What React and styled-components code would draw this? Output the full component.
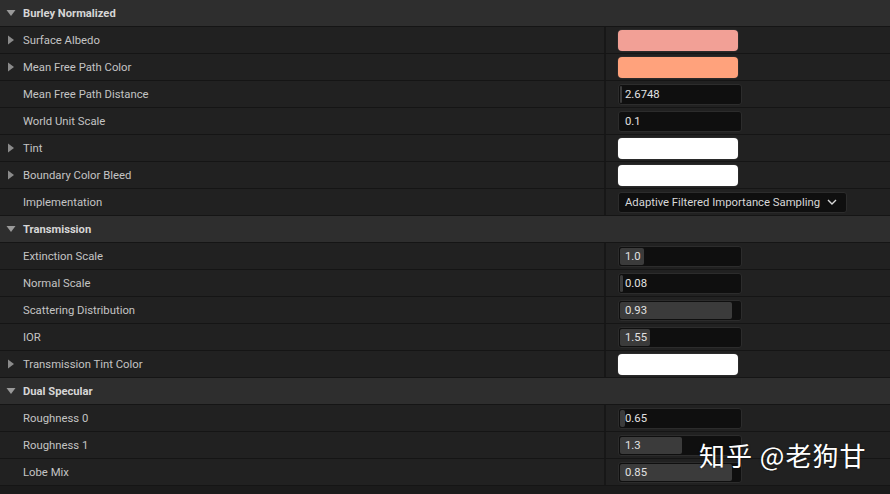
import React from "react";
import styled, { createGlobalStyle } from "styled-components";

const Global = createGlobalStyle`
  html, body { margin: 0; padding: 0; background: #1a1a1a; }
  body { font-family: Roboto, "Noto Sans", "Liberation Sans", sans-serif; }
`;

const Panel = styled.div`
  position: relative;
  width: 890px;
  height: 494px;
  background: #191919;
  overflow: hidden;
  display: flex;
  flex-direction: column;
`;

const HeaderRow = styled.div`
  height: 26px;
  flex: 0 0 26px;
  border-bottom: 1px solid #151515;
  background: #2e2e2e;
  display: flex;
  align-items: center;
  color: #d6d6d6;
  font-size: 11.2px;
  font-weight: 700;
`;

const Row = styled.div`
  height: 26px;
  flex: 0 0 26px;
  border-bottom: 1px solid #151515;
  background: #212121;
  display: grid;
  grid-template-columns: 604px 2px 1fr;
`;

const NameCell = styled.div`
  display: flex;
  align-items: center;
  color: #c4c4c4;
  font-size: 11.3px;
`;

const Divider = styled.div`
  background: #171717;
`;

const ValueCell = styled.div`
  display: flex;
  align-items: center;
  padding-left: 12px;
`;

const ArrowSlot = styled.div`
  width: 23px;
  flex: 0 0 23px;
  display: flex;
  justify-content: center;
  align-items: center;
  padding-right: 2px;
  box-sizing: border-box;
`;

const Swatch = styled.div`
  width: 120px;
  height: 21px;
  border-radius: 4px;
  background: ${(p) => p.$color};
  box-shadow: 0 0 0 1px #2a2a2a;
`;

const NumBox = styled.div`
  position: relative;
  width: 122px;
  height: 19px;
  border-radius: 3px;
  background: #0f0f0f;
  border: 1px solid #2c2c2c;
  display: flex;
  align-items: center;
  overflow: hidden;
`;

const Fill = styled.div`
  position: absolute;
  left: 1px;
  top: 1px;
  bottom: 1px;
  border-radius: 2px;
  background: #3b3b3b;
`;

const NumText = styled.span`
  position: relative;
  padding-left: 6px;
  color: #e2e2e2;
  font-size: 11.3px;
`;

const Dropdown = styled.div`
  width: 221px;
  height: 19px;
  border-radius: 3px;
  background: #0f0f0f;
  border: 1px solid #2c2c2c;
  display: flex;
  align-items: center;
  padding-left: 6px;
  box-sizing: content-box;
  color: #d8d8d8;
  font-size: 11.3px;
  gap: 7px;
`;

const Bottom = styled.div`
  flex: 1;
  background: #1b1b1b;
`;

const Watermark = styled.div`
  position: absolute;
  left: 699px;
  top: 436px;
  color: #ffffff;
  font-family: "Noto Sans CJK SC", "Noto Sans", sans-serif;
  font-size: 26px;
  letter-spacing: 1px;
  text-shadow: 0 0 2px rgba(0,0,0,0.6);
  white-space: nowrap;
`;

const Tri = ({ open }) =>
  open ? (
    <svg width="10" height="8" viewBox="0 0 10 8">
      <path d="M0.5 1 L9.5 1 L5 7 Z" fill="#9a9a9a" />
    </svg>
  ) : (
    <svg width="8" height="10" viewBox="0 0 8 10">
      <path d="M1 0.5 L7 5 L1 9.5 Z" fill="#8a8a8a" />
    </svg>
  );

const Chevron = () => (
  <svg width="10" height="8" viewBox="0 0 10 8">
    <path d="M1 2 L5 6 L9 2" stroke="#d8d8d8" strokeWidth="1.4" fill="none" />
  </svg>
);

const rows = [
  { h: "Burley Normalized" },
  { n: "Surface Albedo", e: true, c: "#f2a096" },
  { n: "Mean Free Path Color", e: true, c: "#ffa27c" },
  { n: "Mean Free Path Distance", v: "2.6748", f: 2 },
  { n: "World Unit Scale", v: "0.1", f: 0 },
  { n: "Tint", e: true, c: "#ffffff" },
  { n: "Boundary Color Bleed", e: true, c: "#ffffff" },
  { n: "Implementation", d: "Adaptive Filtered Importance Sampling" },
  { h: "Transmission" },
  { n: "Extinction Scale", v: "1.0", f: 24 },
  { n: "Normal Scale", v: "0.08", f: 3 },
  { n: "Scattering Distribution", v: "0.93", f: 112 },
  { n: "IOR", v: "1.55", f: 30 },
  { n: "Transmission Tint Color", e: true, c: "#ffffff" },
  { h: "Dual Specular" },
  { n: "Roughness 0", v: "0.65", f: 5 },
  { n: "Roughness 1", v: "1.3", f: 62 },
  { n: "Lobe Mix", v: "0.85", f: 112 },
];

export default function App() {
  return (
    <>
      <Global />
      <Panel>
        {rows.map((r, i) =>
          r.h ? (
            <HeaderRow key={i}>
              <ArrowSlot>
                <Tri open />
              </ArrowSlot>
              {r.h}
            </HeaderRow>
          ) : (
            <Row key={i}>
              <NameCell>
                <ArrowSlot>{r.e && <Tri />}</ArrowSlot>
                {r.n}
              </NameCell>
              <Divider />
              <ValueCell>
                {r.c && <Swatch $color={r.c} />}
                {r.v && (
                  <NumBox>
                    <Fill style={{ width: r.f }} />
                    <NumText>{r.v}</NumText>
                  </NumBox>
                )}
                {r.d && (
                  <Dropdown>
                    {r.d}
                    <Chevron />
                  </Dropdown>
                )}
              </ValueCell>
            </Row>
          )
        )}
        <Bottom />
        <Watermark>知乎 @老狗甘</Watermark>
      </Panel>
    </>
  );
}
